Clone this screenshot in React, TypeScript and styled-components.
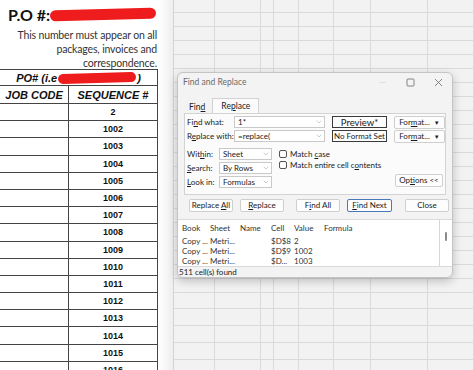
import styled, { createGlobalStyle } from "styled-components";
import { Fragment } from "react";
import { ChevronDown } from "lucide-react";

const GlobalStyle = createGlobalStyle`
  html, body { margin: 0; padding: 0; }
  body {
    width: 474px;
    height: 370px;
    overflow: hidden;
    background: #ffffff;
    font-family: "Liberation Sans", Arial, sans-serif;
  }
`;

const Page = styled.div`
  position: relative;
  display: flex;
  width: 474px;
  height: 370px;
  overflow: hidden;
`;

// ---------- left printed sheet ----------
const Sheet = styled.div`
  width: 160px;
  flex-shrink: 0;
  background: #fff;
  display: flex;
  flex-direction: column;
  & > * { flex-shrink: 0; }
`;

const PoTitle = styled.div`
  display: flex;
  align-items: center;
  height: 28px;
  padding-left: 8px;
  font-family: Lato, "Open Sans", sans-serif;
  font-weight: 700;
  font-size: 16px;
  color: #111;
`;

const Redact = styled.span<{ w: number; h: number }>`
  display: inline-block;
  width: ${(p) => p.w}px;
  height: ${(p) => p.h}px;
  background: #ee1c1c;
  border-radius: ${(p) => p.h / 2}px;
  transform: rotate(-1.5deg);
`;

const Note = styled.div`
  text-align: right;
  white-space: nowrap;
  padding-right: 3px;
  font-family: Lato, "Open Sans", sans-serif;
  font-size: 10.5px;
  letter-spacing: -0.15px;
  line-height: 14px;
  color: #333;
  height: 41px;
`;

const Table = styled.div`
  display: grid;
  grid-template-columns: 69px 89px;
  border-top: 1px solid #444;
  width: 158px;
`;

const Cell = styled.div<{ span?: boolean; h: number; head?: boolean }>`
  grid-column: ${(p) => (p.span ? "1 / 3" : "auto")};
  height: ${(p) => p.h}px;
  box-sizing: border-box;
  border-right: 1px solid #444;
  border-bottom: 1px solid #444;
  display: flex;
  align-items: center;
  justify-content: center;
  font-weight: 700;
  font-style: ${(p) => (p.head ? "italic" : "normal")};
  font-size: ${(p) => (p.head ? "11px" : "9px")};
  color: #111;
  gap: 1px;
`;

// ---------- spreadsheet background ----------
const Gutter = styled.div`
  width: 13px;
  flex-shrink: 0;
  background: linear-gradient(90deg, #fdfdfd, #eeeeee);
  border-right: 1px solid #d4d4d4;
`;

const Grid = styled.div<{ rows: string }>`
  flex: 1;
  display: grid;
  grid-template-columns: 41px 46px 13px 25px 35px 37px 57px 1fr;
  grid-template-rows: ${(p) => p.rows};
  background: #f2f2f2;
`;

const GridCell = styled.div`
  border-right: 1px solid #dadada;
  border-bottom: 1px solid #dadada;
`;

// ---------- dialog ----------
const Dialog = styled.div`
  position: absolute;
  left: 177px;
  top: 72px;
  width: 276px;
  height: 206px;
  box-sizing: border-box;
  background: #f3f3f3;
  border: 1px solid #c4c4c4;
  border-radius: 6px;
  box-shadow: 0 3px 10px rgba(0, 0, 0, 0.22);
  font-family: Lato, "Open Sans", sans-serif;
  font-size: 8px;
  color: #1a1a1a;
  display: flex;
  flex-direction: column;
  overflow: hidden;
`;

const TitleBar = styled.div`
  height: 20px;
  display: flex;
  align-items: center;
  padding-left: 5px;
  color: #6a6a6a;
  font-size: 8.5px;
`;

const TitleText = styled.span`
  flex: 1;
`;

const WinButton = styled.span`
  width: 28px;
  display: flex;
  justify-content: center;
  align-items: center;
`;

const Tabs = styled.div`
  display: flex;
  align-items: flex-end;
  height: 18px;
  padding-left: 6px;
  margin-top: 4px;
`;

const Tab = styled.div<{ active?: boolean }>`
  height: ${(p) => (p.active ? 14 : 12)}px;
  padding: 0 ${(p) => (p.active ? 8 : 4)}px;
  display: flex;
  align-items: center;
  background: ${(p) => (p.active ? "#fbfbfb" : "transparent")};
  border: 1px solid ${(p) => (p.active ? "#d3d3d3" : "transparent")};
  border-bottom: none;
  margin-right: 2px;
  font-size: 8.5px;
`;

const Panel = styled.div`
  margin: 0 6px;
  height: 87px;
  box-sizing: border-box;
  background: #fbfbfb;
  border: 1px solid #d3d3d3;
  padding: 3px 2px 0 2px;
  display: flex;
  flex-direction: column;
  gap: 3px;
`;

const FieldRow = styled.div`
  display: flex;
  align-items: center;
  height: 11px;
  gap: 7px;
`;

const Label = styled.span<{ w: number }>`
  width: ${(p) => p.w}px;
  flex-shrink: 0;
  white-space: nowrap;
`;

const Combo = styled.div<{ w: number }>`
  width: ${(p) => p.w}px;
  height: 12px;
  box-sizing: border-box;
  border: 1px solid #c9c9c9;
  background: #fff;
  display: flex;
  align-items: center;
  padding-left: 3px;
  flex-shrink: 0;
  span { flex: 1; white-space: nowrap; }
  svg { color: #9a9a9a; margin-right: 1px; }
`;

const Button = styled.div<{ w: number; strong?: boolean; def?: boolean; big?: boolean }>`
  width: ${(p) => p.w}px;
  height: ${(p) => (p.strong ? 12 : 13)}px;
  box-sizing: border-box;
  flex-shrink: 0;
  display: flex;
  align-items: center;
  justify-content: center;
  gap: 4px;
  background: #fdfdfd;
  border: ${(p) =>
    p.strong ? "1.5px solid #3a3a3a" : p.def ? "1.5px solid #4a78b8" : "1px solid #cfcfcf"};
  border-radius: ${(p) => (p.strong ? 0 : 2)}px;
  font-size: ${(p) => (p.big ? "9.5px" : "8px")};
  white-space: nowrap;
`;

const Caret = styled.span`
  font-size: 6px;
`;

const Options = styled.div`
  display: flex;
  margin-top: 4px;
  gap: 7px;
`;

const SelectCol = styled.div`
  display: flex;
  flex-direction: column;
  gap: 3px;
`;

const CheckCol = styled.div`
  display: flex;
  flex-direction: column;
  gap: 2px;
  padding-top: 1px;
  flex: 1;
`;

const CheckRow = styled.label`
  display: flex;
  align-items: center;
  gap: 3px;
  height: 9px;
`;

const Box = styled.span`
  width: 8px;
  height: 8px;
  box-sizing: border-box;
  border: 1px solid #555;
  border-radius: 2px;
  background: #fff;
`;

const OptionsButtonWrap = styled.div`
  display: flex;
  align-items: flex-end;
  padding-bottom: 1px;
`;

const ActionRow = styled.div`
  display: flex;
  align-items: center;
  height: 16px;
  margin-top: 2px;
  padding-left: 11px;
`;

const Spacer = styled.span<{ w: number }>`
  width: ${(p) => p.w}px;
  flex-shrink: 0;
`;

const Results = styled.div`
  margin-top: 6px;
  height: 47px;
  background: #fff;
  border-top: 1px solid #dadada;
  border-bottom: 1px solid #dadada;
  display: flex;
`;

const ResultTable = styled.div`
  flex: 1;
  display: grid;
  grid-template-columns: 28px 30px 31px 23px 30px 1fr;
  grid-template-rows: 16px 10px 10px 10px;
  padding-left: 4px;
  align-items: center;
  border-right: 1px solid #d6d6d6;
  color: #333;
  span { white-space: nowrap; overflow: hidden; }
`;

const Scroll = styled.div`
  width: 12px;
  display: flex;
  justify-content: center;
  padding-top: 12px;
  i {
    width: 2px;
    height: 9px;
    background: #8a8a8a;
    border-radius: 1px;
  }
`;

const Status = styled.div`
  height: 11px;
  display: flex;
  align-items: center;
  padding-left: 1px;
  color: #222;
`;

const gridRows = [13, ...Array(20).fill(14), 16, 17, 17, 17, 17];

const seq = [2, ...Array.from({ length: 15 }, (_, i) => 1002 + i)];

const results = [
  ["Copy ...", "Metri...", "", "$D$8", "2", ""],
  ["Copy ...", "Metri...", "", "$D$9", "1002", ""],
  ["Copy ...", "Metri...", "", "$D...", "1003", ""],
];

function Chevron() {
  return <ChevronDown size={8} strokeWidth={1.5} />;
}

export default function App() {
  return (
    <>
      <GlobalStyle />
      <Page>
        <Sheet>
          <PoTitle>
            P.O #:
            <Redact w={106} h={11} />
          </PoTitle>
          <Note>
            This number must appear on all
            <br />
            packages, invoices and
            <br />
            correspondence.
          </Note>
          <Table>
            <Cell span head h={16}>
              PO# (i.e
              <Redact w={78} h={10} />)
            </Cell>
            <Cell head h={18}>JOB CODE</Cell>
            <Cell head h={18}>SEQUENCE #</Cell>
            {seq.map((n) => (
              <Fragment key={n}>
                <Cell h={17.2} />
                <Cell h={17.2}>{n}</Cell>
              </Fragment>
            ))}
          </Table>
        </Sheet>
        <Gutter />
        <Grid rows={gridRows.map((h) => `${h}px`).join(" ")}>
          {gridRows.flatMap((_, r) =>
            Array.from({ length: 8 }, (_, c) => <GridCell key={`${r}-${c}`} />)
          )}
        </Grid>

        <Dialog>
          <TitleBar>
            <TitleText>Find and Replace</TitleText>
            <WinButton>
              <svg width="9" height="9" viewBox="0 0 9 9">
                <path d="M1 4.5h7" stroke="#e0e0e0" strokeWidth="1" />
              </svg>
            </WinButton>
            <WinButton>
              <svg width="9" height="9" viewBox="0 0 9 9">
                <rect x="1" y="1" width="7" height="7" rx="1" fill="none" stroke="#777" strokeWidth="0.9" />
              </svg>
            </WinButton>
            <WinButton>
              <svg width="9" height="9" viewBox="0 0 9 9">
                <path d="M1 1l7 7M8 1l-7 7" stroke="#777" strokeWidth="0.9" />
              </svg>
            </WinButton>
          </TitleBar>

          <Tabs>
            <Tab>
              <span>
                Fin<u>d</u>
              </span>
            </Tab>
            <Tab active>
              <span>
                Re<u>p</u>lace
              </span>
            </Tab>
          </Tabs>

          <Panel>
            <FieldRow>
              <Label w={40}>
                Fi<u>n</u>d what:
              </Label>
              <Combo w={91}>
                <span>1*</span>
                <Chevron />
              </Combo>
              <Button w={55} strong big>
                Preview*
              </Button>
              <Button w={51}>
                <span>
                  For<u>m</u>at...
                </span>
                <Caret>▼</Caret>
              </Button>
            </FieldRow>
            <FieldRow>
              <Label w={40}>
                R<u>e</u>place with:
              </Label>
              <Combo w={91}>
                <span>=replace(</span>
                <Chevron />
              </Combo>
              <Button w={55} strong>
                No Format Set
              </Button>
              <Button w={51}>
                <span>
                  For<u>m</u>at...
                </span>
                <Caret>▼</Caret>
              </Button>
            </FieldRow>

            <Options>
              <SelectCol>
                {[
                  [<>Wit<u>h</u>in:</>, "Sheet"],
                  [<><u>S</u>earch:</>, "By Rows"],
                  [<><u>L</u>ook in:</>, "Formulas"],
                ].map(([l, v], i) => (
                  <FieldRow key={i}>
                    <Label w={25}>{l}</Label>
                    <Combo w={53}>
                      <span>{v}</span>
                      <Chevron />
                    </Combo>
                  </FieldRow>
                ))}
              </SelectCol>
              <CheckCol>
                <CheckRow>
                  <Box />
                  <span>
                    Match <u>c</u>ase
                  </span>
                </CheckRow>
                <CheckRow>
                  <Box />
                  <span>
                    Match entire cell c<u>o</u>ntents
                  </span>
                </CheckRow>
              </CheckCol>
              <OptionsButtonWrap>
                <Button w={48}>
                  <span>
                    Op<u>t</u>ions &lt;&lt;
                  </span>
                </Button>
              </OptionsButtonWrap>
            </Options>
          </Panel>

          <ActionRow>
            <Button w={44}>
              <span>
                Replace <u>A</u>ll
              </span>
            </Button>
            <Spacer w={7} />
            <Button w={44}>
              <span>
                <u>R</u>eplace
              </span>
            </Button>
            <Spacer w={12} />
            <Button w={44}>
              <span>
                F<u>i</u>nd All
              </span>
            </Button>
            <Spacer w={7} />
            <Button w={45} def>
              <span>
                <u>F</u>ind Next
              </span>
            </Button>
            <Spacer w={13} />
            <Button w={44}>Close</Button>
          </ActionRow>

          <Results>
            <ResultTable>
              {["Book", "Sheet", "Name", "Cell", "Value", "Formula"].map((h) => (
                <span key={h}>{h}</span>
              ))}
              {results.flatMap((row, r) =>
                row.map((v, c) => <span key={`${r}-${c}`}>{v}</span>)
              )}
            </ResultTable>
            <Scroll>
              <i />
            </Scroll>
          </Results>
          <Status>511 cell(s) found</Status>
        </Dialog>
      </Page>
    </>
  );
}
